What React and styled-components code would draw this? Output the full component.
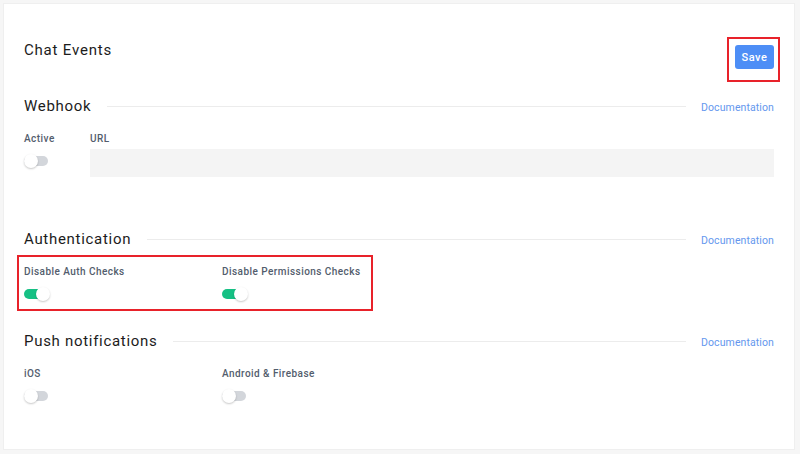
import React from 'react';
import styled, { createGlobalStyle } from 'styled-components';

const GlobalStyle = createGlobalStyle`
  html, body {
    margin: 0;
    padding: 0;
    background: #f6f6f6;
    font-family: Roboto, "Liberation Sans", sans-serif;
  }
`;

const Card = styled.div`
  margin: 3px 5px 5px 3px;
  padding: 0 20px 16px;
  background: #fff;
  border: 1px solid #efefef;
  box-sizing: border-box;
`;

const Header = styled.div`
  display: flex;
  justify-content: space-between;
  align-items: flex-start;
  padding-top: 36px;
  margin-bottom: 27px;
`;

const PageTitle = styled.h1`
  margin: 0;
  font-size: 15px;
  line-height: 20px;
  font-weight: 400;
  letter-spacing: 0.8px;
  color: #1c1c1c;
`;

const Highlight = styled.div`
  position: relative;
  width: fit-content;

  &::after {
    content: '';
    position: absolute;
    top: ${p => p.$inset[0]}px;
    right: ${p => p.$inset[1]}px;
    bottom: ${p => p.$inset[2]}px;
    left: ${p => p.$inset[3]}px;
    border: 2px solid #e8222a;
    pointer-events: none;
  }
`;

const SaveButton = styled.button`
  display: block;
  margin-top: 5px;
  width: 39px;
  height: 24px;
  padding: 0;
  border: none;
  border-radius: 3px;
  background: #4d8ef6;
  color: #fff;
  font-family: Roboto, "Liberation Sans", sans-serif;
  font-size: 11px;
  font-weight: 500;
  letter-spacing: 0.5px;
`;

const Section = styled.section`
  margin-bottom: ${p => p.$gap}px;
`;

const SectionHead = styled.div`
  display: flex;
  align-items: center;
  height: 20px;
  margin-bottom: 17px;
`;

const SectionTitle = styled.h2`
  margin: 0;
  font-size: 15px;
  line-height: 20px;
  font-weight: 400;
  letter-spacing: 0.7px;
  color: #1c1c1c;
`;

const Rule = styled.div`
  flex: 1;
  height: 1px;
  margin: 0 15px 0 16px;
  background: #ececec;
`;

const DocLink = styled.a`
  font-size: 10.5px;
  letter-spacing: 0.1px;
  color: #6497ee;
  text-decoration: none;
  margin-top: 2px;
`;

const Fields = styled.div`
  display: flex;
  align-items: flex-start;
`;

const Field = styled.div`
  display: flex;
  flex-direction: column;
  width: ${p => (p.$width ? `${p.$width}px` : 'auto')};
  flex: ${p => (p.$grow ? 1 : 'none')};
`;

const Label = styled.label`
  font-size: 10px;
  line-height: 12px;
  font-weight: 500;
  letter-spacing: 0.45px;
  color: #535d6d;
`;

const Switch = styled.span`
  position: relative;
  display: block;
  width: 26px;
  height: 14px;
  margin-top: ${p => p.$top}px;

  &::before {
    content: '';
    position: absolute;
    left: 0;
    top: 2px;
    width: 24px;
    height: 10px;
    border-radius: 5px;
    background: ${p => (p.$on ? '#16c084' : '#d3d6db')};
  }

  &::after {
    content: '';
    position: absolute;
    top: 0;
    left: ${p => (p.$on ? '12px' : '0')};
    width: 14px;
    height: 14px;
    border-radius: 50%;
    background: #fff;
    box-shadow: 0 1px 2px rgba(0, 0, 0, 0.22);
  }
`;

const UrlInput = styled.input`
  margin-top: 4px;
  height: 28px;
  border: none;
  background: #f4f4f4;
  padding: 0 10px;
  outline: none;
`;

const Heading = ({ title }) => (
  <SectionHead>
    <SectionTitle>{title}</SectionTitle>
    <Rule />
    <DocLink href="#">Documentation</DocLink>
  </SectionHead>
);

export default function App() {
  return (
    <>
      <GlobalStyle />
      <Card>
        <Header>
          <PageTitle>Chat Events</PageTitle>
          <Highlight $inset={[-3, -6, -13, -8]}>
            <SaveButton>Save</SaveButton>
          </Highlight>
        </Header>

        <Section $gap={52}>
          <Heading title="Webhook" />
          <Fields>
            <Field $width={66}>
              <Label>Active</Label>
              <Switch $top={9} />
            </Field>
            <Field $grow>
              <Label>URL</Label>
              <UrlInput />
            </Field>
          </Fields>
        </Section>

        <Section $gap={30}>
          <Heading title="Authentication" />
          <Highlight $inset={[-11, -12, -10, -7]}>
            <Fields>
              <Field $width={198}>
                <Label>Disable Auth Checks</Label>
                <Switch $on $top={9} />
              </Field>
              <Field>
                <Label>Disable Permissions Checks</Label>
                <Switch $on $top={9} />
              </Field>
            </Fields>
          </Highlight>
        </Section>

        <Section $gap={30}>
          <Heading title="Push notifications" />
          <Fields>
            <Field $width={198}>
              <Label>iOS</Label>
              <Switch $top={9} />
            </Field>
            <Field>
              <Label>Android &amp; Firebase</Label>
              <Switch $top={9} />
            </Field>
          </Fields>
        </Section>
      </Card>
    </>
  );
}
